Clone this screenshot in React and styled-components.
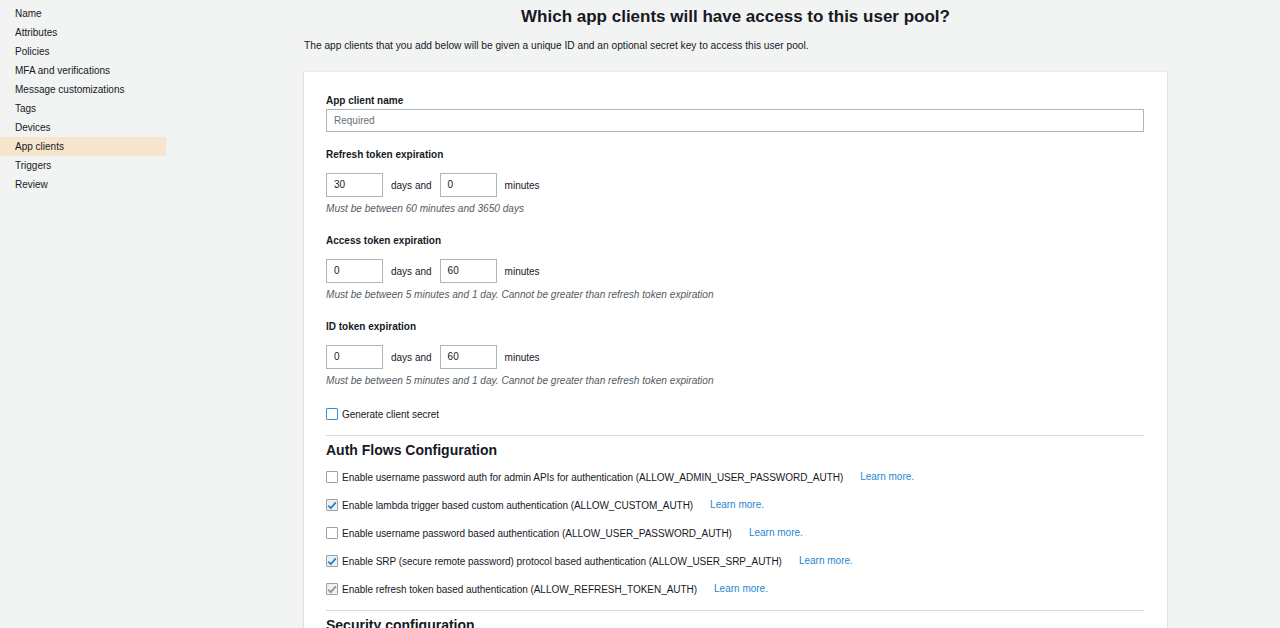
import React from "react";
import styled, { createGlobalStyle } from "styled-components";

const GlobalStyle = createGlobalStyle`
  body {
    margin: 0;
    background: #f2f3f3;
    font-family: "Liberation Sans", Arial, sans-serif;
    color: #16191f;
  }
`;

const Page = styled.div`
  display: flex;
  width: 1280px;
  height: 628px;
  overflow: hidden;
`;

const Sidebar = styled.nav`
  width: 166px;
  padding-top: 4px;
  flex-shrink: 0;
`;

const NavItem = styled.div`
  height: 19px;
  line-height: 19px;
  padding-left: 15px;
  font-size: 10px;
  color: #16191f;
  background: ${(p) => (p.active ? "#f8e5cd" : "transparent")};
`;

const Main = styled.main`
  width: 863px;
  margin-left: 138px;
`;

const Title = styled.h1`
  margin: 6px 0 0;
  text-align: center;
  font-size: 17px;
  line-height: 22px;
  font-weight: bold;
  color: #16191f;
`;

const Intro = styled.p`
  margin: 12px 0 0;
  font-size: 10.2px;
  line-height: 12px;
  color: #16191f;
`;

const Card = styled.section`
  margin-top: 20px;
  background: #fff;
  box-shadow: 0 1px 2px rgba(0, 0, 0, 0.18), 0 0 1px rgba(0, 0, 0, 0.12);
  padding: 23px 23px 40px 22px;
`;

const Label = styled.div`
  font-size: 10px;
  line-height: 12px;
  font-weight: bold;
  margin-top: ${(p) => p.top || 0}px;
`;

const TextInput = styled.div`
  margin-top: 2px;
  height: 21px;
  border: 1px solid #aab7b8;
  padding-left: 7px;
  font-size: 10px;
  line-height: 21px;
  color: #687078;
`;

const InputRow = styled.div`
  display: flex;
  align-items: center;
  margin-top: 12px;
  font-size: 10px;
  color: #16191f;
`;

const SmallInput = styled.div`
  width: 48px;
  height: 22px;
  border: 1px solid #aab7b8;
  padding-left: 7px;
  line-height: 22px;
  font-size: 10px;
  color: #16191f;
`;

const Unit = styled.span`
  margin: 0 8px;
`;

const Hint = styled.div`
  margin-top: 6px;
  font-size: 10.1px;
  line-height: 12px;
  font-style: italic;
  color: #545b64;
`;

const CheckRow = styled.div`
  display: flex;
  align-items: center;
  height: 14px;
  margin-top: ${(p) => p.top || 0}px;
  font-size: 10px;
  letter-spacing: -0.04px;
  color: #16191f;
`;

const Box = styled.span`
  width: 10px;
  height: 10px;
  border: 1px solid ${(p) => (p.focus ? "#3a8fd9" : "#9ba4a5")};
  border-radius: 1px;
  background: ${(p) => (p.checked ? "#f0f0f0" : "#fff")};
  margin-right: 4px;
  display: flex;
  align-items: center;
  justify-content: center;
  flex-shrink: 0;
`;

const Learn = styled.a`
  margin-left: 17px;
  color: #1f86d1;
  text-decoration: none;
  font-size: 10px;
  letter-spacing: 0;
  position: relative;
  top: -1px;
`;

const Divider = styled.hr`
  border: none;
  border-top: 1px solid #d5dbdb;
  margin: ${(p) => p.top || 0}px 0 0;
`;

const SectionTitle = styled.h2`
  margin: 6px 0 0;
  font-size: 14px;
  line-height: 16px;
  font-weight: 600;
  color: #16191f;
`;

const Check = ({ color }) => (
  <svg width="10" height="9" viewBox="0 0 10 9">
    <path d="M1.2 4.6 L3.8 7.2 L8.8 1.4" fill="none" stroke={color} strokeWidth="1.8" />
  </svg>
);

const Checkbox = ({ checked, disabled, focus }) => (
  <Box checked={checked} focus={focus}>
    {checked && <Check color={disabled ? "#8d9596" : "#2483d6"} />}
  </Box>
);

const navItems = [
  "Name",
  "Attributes",
  "Policies",
  "MFA and verifications",
  "Message customizations",
  "Tags",
  "Devices",
  "App clients",
  "Triggers",
  "Review",
];

const tokens = [
  { label: "Refresh token expiration", days: "30", minutes: "0", hint: "Must be between 60 minutes and 3650 days" },
  { label: "Access token expiration", days: "0", minutes: "60", hint: "Must be between 5 minutes and 1 day. Cannot be greater than refresh token expiration" },
  { label: "ID token expiration", days: "0", minutes: "60", hint: "Must be between 5 minutes and 1 day. Cannot be greater than refresh token expiration" },
];

const flows = [
  { text: "Enable username password auth for admin APIs for authentication (ALLOW_ADMIN_USER_PASSWORD_AUTH)" },
  { text: "Enable lambda trigger based custom authentication (ALLOW_CUSTOM_AUTH)", checked: true },
  { text: "Enable username password based authentication (ALLOW_USER_PASSWORD_AUTH)" },
  { text: "Enable SRP (secure remote password) protocol based authentication (ALLOW_USER_SRP_AUTH)", checked: true },
  { text: "Enable refresh token based authentication (ALLOW_REFRESH_TOKEN_AUTH)", checked: true, disabled: true },
];

export default function App() {
  return (
    <Page>
      <GlobalStyle />
      <Sidebar>
        {navItems.map((n) => (
          <NavItem key={n} active={n === "App clients"}>
            {n}
          </NavItem>
        ))}
      </Sidebar>
      <Main>
        <Title>Which app clients will have access to this user pool?</Title>
        <Intro>
          The app clients that you add below will be given a unique ID and an optional secret key to access this user pool.
        </Intro>
        <Card>
          <Label>App client name</Label>
          <TextInput>Required</TextInput>
          {tokens.map((t, i) => (
            <div key={t.label}>
              <Label top={i === 0 ? 17 : 20}>{t.label}</Label>
              <InputRow>
                <SmallInput>{t.days}</SmallInput>
                <Unit>days and</Unit>
                <SmallInput>{t.minutes}</SmallInput>
                <Unit>minutes</Unit>
              </InputRow>
              <Hint>{t.hint}</Hint>
            </div>
          ))}
          <CheckRow top={20}>
            <Checkbox focus />
            Generate client secret
          </CheckRow>
          <Divider top={14} />
          <SectionTitle>Auth Flows Configuration</SectionTitle>
          {flows.map((f, i) => (
            <CheckRow key={f.text} top={i === 0 ? 12 : 14}>
              <Checkbox checked={f.checked} disabled={f.disabled} />
              {f.text}
              <Learn href="#">Learn more.</Learn>
            </CheckRow>
          ))}
          <Divider top={14} />
          <SectionTitle>Security configuration</SectionTitle>
        </Card>
      </Main>
    </Page>
  );
}
